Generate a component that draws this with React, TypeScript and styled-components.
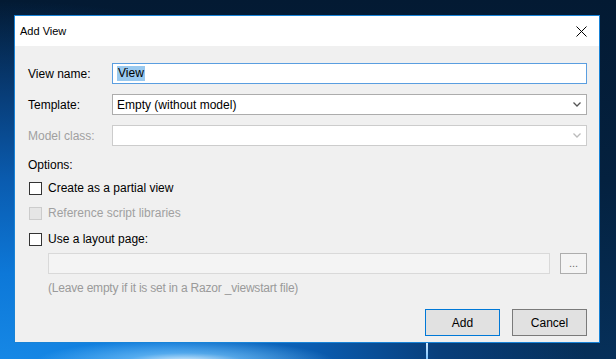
import React from "react";
import styled, { createGlobalStyle } from "styled-components";

const GlobalStyle = createGlobalStyle`
  html, body { margin: 0; padding: 0; }
  body { font-family: "Liberation Sans", Arial, sans-serif; font-size: 12px; }
`;

const Desktop = styled.div`
  position: relative;
  width: 616px;
  height: 359px;
  box-sizing: border-box;
  padding: 15px 16px 0 14px;
  overflow: hidden;
  background:
    radial-gradient(ellipse 200px 30px at 185px 362px, rgba(235, 248, 255, 0.95) 0%, rgba(140, 210, 255, 0.55) 30%, transparent 75%),
    radial-gradient(ellipse 620px 420px at 0px 400px, #1a8fec 0%, #0d78d8 30%, #0a5cb0 52%, #083e7a 72%, transparent 95%),
    linear-gradient(180deg, #031a33 0%, #04213f 50%, #06305a 100%);
`;

const Beam = styled.div`
  position: absolute;
  left: 426px;
  top: 343px;
  width: 2px;
  height: 16px;
  background: linear-gradient(180deg, #cfe9ff, #7ec4ff);
`;

const Window = styled.div`
  width: 586px;
  height: 328px;
  box-sizing: border-box;
  border: 1px solid #1883d7;
  background: #f0f0f0;
  display: flex;
  flex-direction: column;
`;

const TitleBar = styled.div`
  height: 30px;
  background: #ffffff;
  display: flex;
  align-items: center;
  justify-content: space-between;
  padding: 0 12px 0 5px;
  color: #000;
`;

const Title = styled.span`
  font-size: 11px;
  line-height: 16px;
`;

const CloseBtn = styled.span`
  width: 12px;
  height: 12px;
  display: flex;
  align-items: center;
  justify-content: center;
`;

const Body = styled.div`
  flex: 1;
  display: flex;
  flex-direction: column;
  padding: 17px 12px 6px 13px;
`;

const FieldRow = styled.div<{ $mt?: number }>`
  display: grid;
  grid-template-columns: 84px 1fr;
  align-items: center;
  margin-top: ${(p) => p.$mt ?? 0}px;
`;

const Label = styled.span<{ $disabled?: boolean }>`
  color: ${(p) => (p.$disabled ? "#a0a0a0" : "#000")};
  line-height: 16px;
`;

const TextBox = styled.div`
  height: 21px;
  box-sizing: border-box;
  border: 1px solid #5a9ee0;
  background: #fff;
  display: flex;
  align-items: center;
  padding-left: 4px;
`;

const Selected = styled.span`
  background: #99c9ef;
  color: #000;
  line-height: 15px;
  padding: 0 1px;
`;

const Select = styled.div<{ $disabled?: boolean }>`
  height: 21px;
  box-sizing: border-box;
  border: 1px solid ${(p) => (p.$disabled ? "#cccccc" : "#acacac")};
  background: #fff;
  display: flex;
  align-items: center;
  justify-content: space-between;
  padding: 0 5px 0 4px;
  color: #000;
`;

const SectionLabel = styled.div<{ $mt: number }>`
  margin-top: ${(p) => p.$mt}px;
  line-height: 16px;
  color: #000;
`;

const CheckRow = styled.div<{ $mt: number; $disabled?: boolean }>`
  margin-top: ${(p) => p.$mt}px;
  display: flex;
  align-items: center;
  gap: 6px;
  line-height: 16px;
  color: ${(p) => (p.$disabled ? "#a0a0a0" : "#000")};
`;

const Box = styled.span<{ $disabled?: boolean }>`
  width: 13px;
  height: 13px;
  box-sizing: border-box;
  margin-left: 1px;
  border: 1px solid ${(p) => (p.$disabled ? "#cccccc" : "#333333")};
  background: ${(p) => (p.$disabled ? "#e6e6e6" : "#ffffff")};
`;

const PathRow = styled.div`
  margin-top: 6px;
  margin-left: 20px;
  display: flex;
  gap: 10px;
`;

const PathBox = styled.div`
  flex: 1;
  height: 21px;
  box-sizing: border-box;
  border: 1px solid #d9d9d9;
  background: #f4f4f4;
`;

const BrowseBtn = styled.div`
  width: 27px;
  height: 21px;
  box-sizing: border-box;
  border: 1px solid #adadad;
  background: #f4f4f4;
  display: flex;
  align-items: center;
  justify-content: center;
  color: #6d6d6d;
  font-size: 11px;
  line-height: 11px;
`;

const Hint = styled.div`
  margin-top: 6px;
  margin-left: 20px;
  line-height: 16px;
  color: #9a9a9a;
  letter-spacing: -0.2px;
`;

const ButtonBar = styled.div`
  margin-top: auto;
  display: flex;
  justify-content: flex-end;
  gap: 12px;
`;

const Button = styled.div<{ $default?: boolean }>`
  width: 75px;
  height: 27px;
  box-sizing: border-box;
  border: 1px solid ${(p) => (p.$default ? "#0078d7" : "#7a7a7a")};
  background: #e1e1e1;
  display: flex;
  align-items: center;
  justify-content: center;
  color: #000;
`;

const Chevron = ({ color }: { color: string }) => (
  <svg width="8" height="5" viewBox="0 0 8 5">
    <path d="M0.5 0.5 L4 4 L7.5 0.5" fill="none" stroke={color} strokeWidth="1.3" />
  </svg>
);

export default function App() {
  return (
    <>
      <GlobalStyle />
      <Desktop>
        <Window>
          <TitleBar>
            <Title>Add View</Title>
            <CloseBtn>
              <svg width="11" height="11" viewBox="0 0 11 11">
                <path d="M0.5 0.5 L10.5 10.5 M10.5 0.5 L0.5 10.5" stroke="#000" strokeWidth="1" fill="none" />
              </svg>
            </CloseBtn>
          </TitleBar>
          <Body>
            <FieldRow>
              <Label>View name:</Label>
              <TextBox>
                <Selected>View</Selected>
              </TextBox>
            </FieldRow>
            <FieldRow $mt={10}>
              <Label>Template:</Label>
              <Select>
                <span>Empty (without model)</span>
                <Chevron color="#555" />
              </Select>
            </FieldRow>
            <FieldRow $mt={10}>
              <Label $disabled>Model class:</Label>
              <Select $disabled>
                <span />
                <Chevron color="#bbb" />
              </Select>
            </FieldRow>
            <SectionLabel $mt={11}>Options:</SectionLabel>
            <CheckRow $mt={7}>
              <Box />
              <span>Create as a partial view</span>
            </CheckRow>
            <CheckRow $mt={9} $disabled>
              <Box $disabled />
              <span>Reference script libraries</span>
            </CheckRow>
            <CheckRow $mt={10}>
              <Box />
              <span>Use a layout page:</span>
            </CheckRow>
            <PathRow>
              <PathBox />
              <BrowseBtn>...</BrowseBtn>
            </PathRow>
            <Hint>(Leave empty if it is set in a Razor _viewstart file)</Hint>
            <ButtonBar>
              <Button $default>Add</Button>
              <Button>Cancel</Button>
            </ButtonBar>
          </Body>
        </Window>
        <Beam />
      </Desktop>
    </>
  );
}
